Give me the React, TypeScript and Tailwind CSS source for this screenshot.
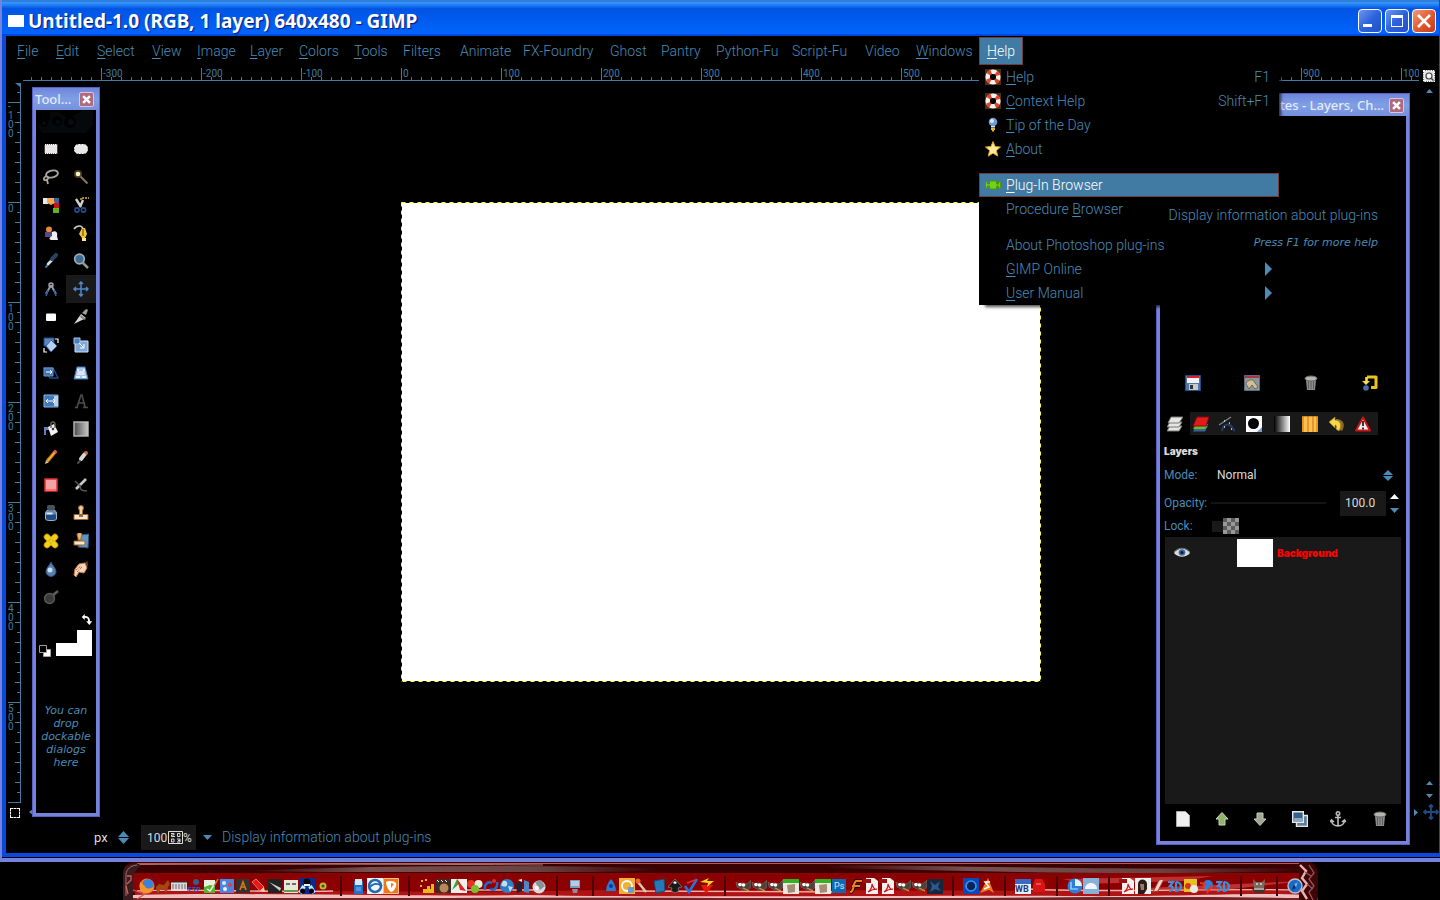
import React from "react";

type Kids = { children?: React.ReactNode };

function Icon({ children, size = 16 }: Kids & { size?: number }) {
  return (
    <svg viewBox="0 0 16 16" width={size} height={size} className="block shrink-0" aria-hidden="true">
      {children}
    </svg>
  );
}

/* The letter after an underscore is the keyboard mnemonic. */
function Mnemonic({ text }: { text: string }) {
  const at = text.indexOf("_");
  if (at < 0) return <>{text}</>;
  return (
    <>
      {text.slice(0, at)}
      <span className="underline underline-offset-2">{text[at + 1]}</span>
      {text.slice(at + 2)}
    </>
  );
}

function Triangle({ dir, className = "" }: { dir: "up" | "down" | "left" | "right"; className?: string }) {
  const d = {
    up: "M0 5 L5 0 L10 5Z",
    down: "M0 0 L5 5 L10 0Z",
    left: "M5 0 L0 5 L5 10Z",
    right: "M0 0 L5 5 L0 10Z",
  }[dir];
  const flat = dir === "up" || dir === "down";
  return (
    <svg viewBox={flat ? "0 0 10 5" : "0 0 5 10"} preserveAspectRatio="none" className={"block shrink-0 " + className} fill="currentColor" aria-hidden="true">
      <path d={d} />
    </svg>
  );
}

/* ---------- tool icons ---------- */

const tools: { name: string; art: React.ReactNode }[] = [
  { name: "Rectangle Select", art: <rect x="2" y="3.500" width="12" height="9" fill="#e8e6e6" stroke="#fff" strokeDasharray="1 1" /> },
  { name: "Ellipse Select", art: <rect x="1.500" y="3.500" width="13" height="9" rx="4" fill="#e8e6e6" stroke="#fff" strokeDasharray="2 1" /> },
  { name: "Free Select", art: <g fill="none" stroke="#aaa7a2" strokeWidth="1.800"><ellipse cx="9" cy="5" rx="6" ry="3.500" transform="rotate(-12 9 5)" /><path d="M4 7 C0 8 0 12 3 11 S6 8 4 8 M4 11 L5 15" /></g> },
  { name: "Fuzzy Select", art: <g><path d="M7 7 L14.500 14.500" stroke="#8d7754" strokeWidth="2" /><circle cx="5" cy="5" r="4" fill="#6c5530" opacity=".7" /><circle cx="5" cy="5" r="2.300" fill="#fff3c0" /></g> },
  { name: "Select by Color", art: <g><path d="M0 1h5v6H0z" fill="#e9e9ef" /><path d="M4 1h7l1 5-4 2-4-2z" fill="#f2a94f" /><path d="M11 1h5v5h-4z" fill="#3465a4" /><path d="M11 6h5v5h-5z" fill="#cc1020" /><path d="M10 11h6v5h-6z" fill="#5fb61b" /></g> },
  { name: "Scissors", art: <g fill="none"><path d="M3 2 L8 10 M10 3 L7 10" stroke="#cfcfcb" strokeWidth="2.400" /><path d="M8 3V1h8" stroke="#e9b23c" strokeWidth="1.400" strokeDasharray="2 1" /><rect x="2" y="11" width="4" height="4" rx="1.500" stroke="#204a87" strokeWidth="1.800" /><rect x="8.500" y="11" width="4" height="4" rx="1.500" stroke="#204a87" strokeWidth="1.800" /></g> },
  { name: "Foreground Select", art: <g><circle cx="6" cy="4.500" r="3" fill="#e58a36" /><path d="M2 7h9v5H2z" fill="#554a86" /><path d="M9 7c4-2 6 1 5 4l1 4H8c-3-1-1-3 1-4z" fill="#eeeef4" /></g> },
  { name: "Paths", art: <g><path d="M1 4 C4 0 9 0 10 4" stroke="#c9c9c3" strokeWidth="1.600" fill="none" /><path d="M9 3h3l2 6-2 4H9L6 9z" fill="#f0c53c" /><path d="M10 4v7" stroke="#574117" /><path d="M9 13h4v3H9z" fill="#fae98c" /></g> },
  { name: "Color Picker", art: <g strokeLinecap="round"><path d="M3 14 L9 7" stroke="#3a77a5" strokeWidth="2" /><path d="M5 11 L9 7" stroke="#d9dde0" strokeWidth="2.500" /><path d="M9 6 L13 2" stroke="#29435f" strokeWidth="4" /></g> },
  { name: "Zoom", art: <g><path d="M10 10 L15 15" stroke="#979797" strokeWidth="2.500" /><circle cx="6.500" cy="6" r="4.800" fill="#416b94" stroke="#a4adb5" strokeWidth="1.700" /></g> },
  { name: "Measure", art: <g fill="none"><path d="M8 4 L3 13" stroke="#8d9bac" strokeWidth="2" /><path d="M8 4 L13 13" stroke="#8d9bac" strokeWidth="2" /><path d="M5 9 L3 15 M11 9 L13 15" stroke="#345eab" strokeWidth="1.500" /><circle cx="8" cy="4" r="2" stroke="#a5a5a5" strokeWidth="1.500" /></g> },
  { name: "Move", art: <path d="M8 1v14M1 8h14M6 3l2-2 2 2M6 13l2 2 2-2M3 6L1 8l2 2M13 6l2 2-2 2" stroke="#5185c9" strokeWidth="1.500" fill="none" /> },
  { name: "Align", art: <rect x="3" y="4.500" width="10" height="7.500" rx="1" fill="#fff" /> },
  { name: "Crop", art: <g><path d="M1 15 L8 5 L13 9 Z" fill="#d8d8d4" /><path d="M9 4l4-4 2 1-2 5z" fill="#9e9e9a" /><path d="M8 6l5 4-2 1-4-3z" fill="#878783" /></g> },
  { name: "Rotate", art: <g><path d="M1 1h10v8H1z" fill="#5b87c0" stroke="#204a87" /><path d="M8 3l6 6-6 6-5-6z" fill="#b9d1ee" stroke="#3465a4" /><path d="M12 2h3v4M1 11v4h3" stroke="#fff" fill="none" strokeWidth="1.200" /></g> },
  { name: "Scale", art: <g><path d="M2 4h13v11H2z" fill="#7da9d9" stroke="#cfe0f4" /><path d="M1 1h6v6H1z" fill="#4b80bf" stroke="#a9c6e9" /><path d="M6 6l5 5M11 7v4H7" stroke="#fff" fill="none" /></g> },
  { name: "Shear", art: <g><path d="M1 3h9l5 10H7z" fill="none" stroke="#204a87" strokeWidth="1.300" /><path d="M1 3h9v8H1z" fill="#4373ad" stroke="#6c98cc" /><path d="M3 7h6M7 5l2 2-2 2" stroke="#fff" fill="none" /></g> },
  { name: "Perspective", art: <g><path d="M4 2h8l3 12H1z" fill="#a9c5e9" stroke="#4377b4" /><path d="M5 6h6l1 4H4z" fill="#dce8f7" /><path d="M3 12h4M9 12h4M5 4v2M11 4v2" stroke="#fff" strokeWidth="1.400" /></g> },
  { name: "Flip", art: <g><path d="M1 2h14v12H1z" fill="#4078b8" stroke="#8db4e2" /><path d="M11 3h4v10h-4z" fill="#b9d0ec" /><path d="M3 8h9M5 6L3 8l2 2M10 6l2 2-2 2" stroke="#fff" fill="none" /></g> },
  { name: "Text", art: <path d="M2 14.500h3M10 14.500h5M4 14L8 2h1l3 12M6 10h6" stroke="#4c4c4c" strokeWidth="1.600" fill="none" /> },
  { name: "Bucket Fill", art: <g><path d="M1 6h6v3H3v5H1z" fill="#6582b8" /><path d="M5 6l6-3 4 8-7 4z" fill="#f2f2f2" /><path d="M8 7V2c1-2 4-1 4 1v4" stroke="#70665d" fill="none" strokeWidth="1.400" /><circle cx="10" cy="8" r="1.200" fill="#333" /></g> },
  { name: "Blend", art: <g><defs><linearGradient id="blend"><stop stopColor="#4b4b4b" /><stop offset="1" stopColor="#c7c7c7" /></linearGradient></defs><rect x="1" y="1" width="14" height="14" fill="url(#blend)" stroke="#bdbdbd" strokeWidth="1.400" /></g> },
  { name: "Pencil", art: <g><path d="M4 12.500L12 3" stroke="#b86c12" strokeWidth="3.600" /><path d="M4.500 12L12 3" stroke="#f1b945" strokeWidth="1.500" /><path d="M11.500 3.600l1.700-2" stroke="#de5868" strokeWidth="3.600" /><path d="M2 15l1-3.500 2.500 2z" fill="#e8d4a8" /></g> },
  { name: "Paintbrush", art: <g strokeLinecap="round"><path d="M12 5l1-1" stroke="#c5743d" strokeWidth="4" /><path d="M8 10l3-4" stroke="#d3d7d9" strokeWidth="4" /><path d="M5 14l2-2" stroke="#4d4d4d" strokeWidth="2" /></g> },
  { name: "Eraser", art: <g><path d="M2 2h12v12H2z" fill="#f5a2a4" stroke="#df3030" strokeWidth="1.500" /><path d="M3 12h10v2H3z" fill="#fb6e6e" /></g> },
  { name: "Airbrush", art: <g fill="none"><path d="M3 12L13 2" stroke="#c7c7c7" strokeWidth="2.600" /><path d="M8 8c-2 4 0 6 6 6M2 4l5 5" stroke="#565656" strokeWidth="1.400" /></g> },
  { name: "Ink", art: <g><path d="M2.500 8c0-2 2-3 5.500-3s5.500 1 5.500 3v6c0 2-11 2-11 0z" fill="#5f86b8" stroke="#9db4cf" /><path d="M3 9.500h10V14c-1 1.300-9 1.300-10 0z" fill="#1f4b83" /><path d="M3.500 7.500h6v2h-6z" fill="#dce6f0" /><rect x="4" y="0" width="8" height="5.500" rx="2" fill="#4b5054" /></g> },
  { name: "Clone", art: <g stroke="#a7631d"><path d="M5.500 3a2.500 2.500 0 015 0L9.500 6v4h-3V6z" fill="#f0cf9f" /><path d="M1 9.500h14v5H1z" fill="#f4e7d3" /><path d="M6 11h4" stroke="#444" strokeWidth="1.400" /></g> },
  { name: "Heal", art: <g strokeLinecap="round"><path d="M4 4l8 8M12 4l-8 8" stroke="#c29400" strokeWidth="6.500" /><path d="M4 4l8 8M12 4l-8 8" stroke="#f3d01e" strokeWidth="4.800" /><path d="M5.500 8L8 5.500 10.500 8 8 10.500z" fill="none" stroke="#b98c08" strokeDasharray="1 1" strokeLinecap="butt" /></g> },
  { name: "Perspective Clone", art: <g><path d="M7 2l9-1-1 14-10-1z" fill="#5e93c5" stroke="#294f7d" /><path d="M4 2a2.500 2.500 0 015 0L8 5v2H5V5z" fill="#e8b57a" stroke="#a7631d" /><path d="M1 8h11v4H1z" fill="#f4e7d3" stroke="#a7631d" /></g> },
  { name: "Blur", art: <g><path d="M8 1c1 3 5 6 5 9.500a5 5 0 01-10 0C3 7 7 4 8 1z" fill="#5580b0" stroke="#36557d" /><circle cx="7" cy="9" r="2.500" fill="#cadcf0" /></g> },
  { name: "Smudge", art: <g><path d="M11 2l4-2v5l-3 2z" fill="#53371b" /><path d="M2 8l4-5 6-1 2 5-3 5-5-1-3 5-2-2z" fill="#f3d6bd" stroke="#cb7a36" /><path d="M3 9l5-4M4 11l5-5" stroke="#b33224" strokeDasharray="1 1" /></g> },
  { name: "Dodge / Burn", art: <g><path d="M9 7l6-5" stroke="#5d5d5d" strokeWidth="2.500" /><circle cx="6.500" cy="9.500" r="5" fill="#3a3a3a" stroke="#5c5c5c" strokeWidth="1.300" /></g> },
];

/* ---------- shared small art ---------- */

const moveCross = <path d="M8 1v14M1 8h14M6 3l2-2 2 2M6 13l2 2 2-2M3 6L1 8l2 2M13 6l2 2-2 2" stroke="#204a87" strokeWidth="1.800" fill="none" />;

const lifebuoy = (
  <g>
    <path d="M0 0h16v16H0z" fill="#4c3016" />
    <circle cx="8" cy="8" r="5.300" fill="none" stroke="#f3f1ee" strokeWidth="4.600" />
    <circle cx="8" cy="8" r="5.300" fill="none" stroke="#e2432c" strokeWidth="4.600" strokeDasharray="3.330 5" strokeDashoffset="-2.500" />
    <circle cx="8" cy="8" r="3" fill="#000" />
  </g>
);
const bulb = (
  <g>
    <circle cx="8" cy="5" r="4.300" fill="#6f9ad0" />
    <circle cx="7" cy="4" r="2" fill="#d8e6f6" />
    <path d="M6 9h4v1.500H6z" fill="#dce5f0" />
    <path d="M6 11h4v2H6zM7 13h2v1.500H7z" fill="#e8b923" />
  </g>
);
const star = <path d="M8 .6l2.100 5 5.400.4-4.100 3.500 1.300 5.600L8 12.200l-4.700 2.900 1.300-5.600L.5 6l5.400-.4z" fill="#fdeba0" stroke="#e0a020" />;
const plug = (
  <g fill="#73d216" stroke="#4e9a06">
    <path d="M.5 5h2v2h2V4h7v3h2V5h2v6h-2V9h-2v3h-7V9h-2v2h-2z" />
  </g>
);
const trash = (
  <g>
    <path d="M3 5h10l-1 10H4z" fill="#8d8d8b" />
    <path d="M5.500 6v8M8 6v8M10.500 6v8" stroke="#5c5c5a" />
    <ellipse cx="8" cy="3.500" rx="6" ry="2.500" fill="#b5b5b2" stroke="#6a6a68" />
  </g>
);
const swap = <path d="M1 4l4-4v2.500c5 0 7 3 7 7h3l-4 5-4-5h2.500c0-3-1-4.500-4.500-4.500V8z" fill="#fff" />;

/* ---------- window chrome ---------- */

const menus: [string, string][] = [
  ["_File", "w-[39px]"], ["_Edit", "w-[41px]"], ["_Select", "w-[55px]"], ["_View", "w-[45px]"],
  ["_Image", "w-[53px]"], ["_Layer", "w-[49px]"], ["_Colors", "w-[55px]"], ["_Tools", "w-[49px]"],
  ["Filte_rs", "w-[57px]"], ["Animate", "w-[63px]"], ["FX-Foundry", "w-[87px]"], ["Ghost", "w-[51px]"],
  ["Pantry", "w-[55px]"], ["Python-Fu", "w-[76px]"], ["Script-Fu", "w-[73px]"], ["Video", "w-[51px]"],
  ["_Windows", "w-[71px]"],
];

function TitleBar() {
  const box = "flex size-6 items-center justify-center rounded-[4px] border border-white";
  return (
    <header className="flex h-9 shrink-0 items-center gap-1 border-t-2 border-[#2f7fd8] bg-linear-to-b from-[#3c9bff] from-0% via-[#0054e3] via-20% to-[#0066ff] pl-[6px] pr-[3px] pt-1 shadow-[inset_0_-2px_0_#0048d8]">
      <span className="h-3 w-4 bg-white" />
      <h1 className="grow whitespace-nowrap font-['Noto_Sans',sans-serif] text-[19px] leading-6 font-bold text-white [text-shadow:1px_1px_1px_#0a1883]">
        Untitled-1.0 (RGB, 1 layer) 640x480 - GIMP
      </h1>
      <div className="flex gap-[3px]">
        <button aria-label="Minimize" className={box + " bg-linear-to-br from-[#6d95f0] via-[#2c62dd] to-[#2450c8]"}>
          <Icon><path d="M1 11h9v3H1z" fill="#fff" /></Icon>
        </button>
        <button aria-label="Maximize" className={box + " bg-linear-to-br from-[#6d95f0] via-[#2c62dd] to-[#2450c8]"}>
          <Icon><path d="M2 2h12v12H2z M3 5h10v8H3z" fillRule="evenodd" fill="#fff" /></Icon>
        </button>
        <button aria-label="Close" className={box + " bg-linear-to-br from-[#f09a78] via-[#e25a33] to-[#c43a12]"}>
          <Icon><path d="M2 2l12 12M14 2L2 14" stroke="#fff" strokeWidth="2.600" /></Icon>
        </button>
      </div>
    </header>
  );
}

type Item = { label: string; icon?: React.ReactNode; keys?: string; sub?: boolean; active?: boolean; gap?: boolean };
const helpItems: Item[] = [
  { label: "_Help", icon: lifebuoy, keys: "F1" },
  { label: "_Context Help", icon: lifebuoy, keys: "Shift+F1" },
  { label: "_Tip of the Day", icon: bulb },
  { label: "_About", icon: star },
  { label: "_Plug-In Browser", icon: plug, active: true, gap: true },
  { label: "Procedure _Browser" },
  { label: "About Photoshop plug-ins", gap: true },
  { label: "_GIMP Online", sub: true },
  { label: "_User Manual", sub: true },
];

function HelpMenu() {
  return (
    <div role="menu" className="absolute left-0 top-7 z-30 flex w-[300px] flex-col bg-black shadow-[4px_4px_3px_-2px_rgba(0,0,0,0.7)]">
      {helpItems.map((it) => (
        <button
          key={it.label}
          role="menuitem"
          className={
            "flex h-6 items-center gap-[5px] border pl-[5px] pr-[6px] text-left whitespace-nowrap " +
            (it.gap ? "mt-3 " : "") +
            (it.active ? "border-[#703c40] bg-[#417ba3] text-white" : "border-transparent")
          }
        >
          <span className="size-4">{it.icon && <Icon>{it.icon}</Icon>}</span>
          <span className="grow"><Mnemonic text={it.label} /></span>
          {it.keys && <span className="pr-[2px]">{it.keys}</span>}
          {it.sub && <Triangle dir="right" className="h-[14px] w-[7px]" />}
        </button>
      ))}
    </div>
  );
}

function MenuBar() {
  return (
    <nav className="flex h-[30px] shrink-0 items-stretch pl-[3px] pt-px">
      {menus.map(([label, width]) => (
        <button key={label} className={"shrink-0 px-2 text-left whitespace-nowrap " + width}>
          <Mnemonic text={label} />
        </button>
      ))}
      <div className="relative w-11 shrink-0">
        <button className="h-7 w-full border border-[#703c40] bg-[#417ba3] px-[7px] text-left text-white">
          <Mnemonic text="_Help" />
        </button>
        <HelpMenu />
        <div role="tooltip" className="absolute left-[188px] top-[163px] z-40 flex w-[224px] flex-col items-end gap-[10px] bg-black pt-[6px] pr-[13px] whitespace-nowrap">
          <span className="leading-[18px]">Display information about plug-ins</span>
          <span className="font-['DejaVu_Sans',sans-serif] text-[11px] leading-[18px] font-medium italic">Press F1 for more help</span>
        </div>
      </div>
    </nav>
  );
}

function TopRuler() {
  const majors = Array.from({ length: 15 }, (_, i) => i - 4);
  return (
    <svg width="100%" height="15" className="block overflow-hidden" fill="#417ba3" aria-hidden="true">
      <rect width="100%" height="1" y="14" />
      {majors.map((m) => {
        const x = 378 + m * 100;
        return (
          <g key={m}>
            <rect x={x} y="2" width="1" height="12" />
            {[1, 2, 3, 4, 5, 6, 7, 8, 9].map((k) => (
              <rect key={k} x={x + k * 10} y="11" width="1" height="3" />
            ))}
            <text x={x + 2} y="11" fontSize="10" fontWeight="400">{m * 100}</text>
          </g>
        );
      })}
    </svg>
  );
}

function LeftRuler() {
  const majors = Array.from({ length: 7 }, (_, i) => i - 1);
  return (
    <svg width="17" height="722" className="block" fill="#417ba3" aria-hidden="true">
      <path d="M9 2h5v4z" />
      <rect x="14" y="2" width="1" height="720" />
      <rect x="11" y="11" width="3" height="1" />
      {majors.map((m) => {
        const y = 121 + m * 100;
        return (
          <g key={m}>
            <rect x="2" y={y} width="12" height="1" />
            {[1, 2, 3, 4, 5, 6, 7, 8, 9].map((k) => (
              <rect key={k} x={k % 2 ? 11 : 9} y={y + k * 10} width={k % 2 ? 3 : 5} height="1" />
            ))}
            {String(m * 100).split("").map((c, i) => (
              <text key={i} x="2" y={y + (m < 0 ? 8 : 10) + i * 9} fontSize="10" fontWeight="400">{c}</text>
            ))}
          </g>
        );
      })}
      <rect x="2" y="721" width="12" height="1" />
    </svg>
  );
}

/* ---------- floating windows ---------- */

function PaletteWindow({ title, className, align, children }: Kids & { title: string; className: string; align: string }) {
  return (
    <section className={"absolute z-20 flex flex-col border border-[#5a5fc4] bg-[#7583dc] " + className}>
      <header className="flex h-[22px] shrink-0 items-center gap-1 bg-linear-to-b from-[#6f86dc] via-[#7f9fe6] to-[#7590dc] pl-[2px] pr-[5px]">
        <h2 className={"grow overflow-hidden font-['Noto_Sans',sans-serif] text-[13px] leading-5 font-medium whitespace-nowrap text-[#e4eafa] " + align}>{title}</h2>
        <button aria-label={"Close " + title} className="flex size-[15px] shrink-0 items-center justify-center rounded-[2px] border border-[#dcc5d8] bg-[#b06a80]">
          <Icon size={11}><path d="M3 3l10 10M13 3L3 13" stroke="#fff" strokeWidth="3.600" /></Icon>
        </button>
      </header>
      <div className="mx-[3px] mb-[3px] flex grow flex-col bg-black">{children}</div>
    </section>
  );
}

function Toolbox() {
  return (
    <PaletteWindow title="Tool..." align="text-left" className="-bottom-[14px] left-[9px] top-[6px] w-[68px]">
      <svg viewBox="0 0 60 25" className="block h-[25px] w-[60px] shrink-0" aria-hidden="true">
        <path d="M3 14c3-6 8-6 11-2V2h8l8 5h6L46 1h11v14l-7 8H8c-4-1-6-5-5-9z" fill="#06090c" />
        <circle cx="8" cy="13" r="4" fill="#000" /><circle cx="21" cy="11" r="5" fill="#000" /><circle cx="34" cy="12" r="6" fill="#000" />
        <circle cx="8" cy="13" r="2" fill="#080c10" /><circle cx="22" cy="12" r="2" fill="#080c10" /><circle cx="35" cy="12" r="3" fill="#080c10" />
      </svg>
      <div className="grid grid-cols-2">
        {tools.map((t) => (
          <button key={t.name} aria-label={t.name} className={"flex h-7 items-center justify-center " + (t.name === "Move" ? "bg-[#191919]" : "")}>
            <Icon>{t.art}</Icon>
          </button>
        ))}
      </div>
      <svg viewBox="0 0 60 48" className="block h-12 w-[60px] shrink-0" aria-hidden="true">
        <g transform="translate(45 3) scale(.75)">{swap}</g>
        <path d="M41 19h15v26H20V32h21z" fill="#fff" />
        <path d="M7.500 38.500h7v7h-7z" fill="#fff" stroke="#a89c9c" />
        <path d="M3.500 34.500h7v7h-7z" fill="#000" stroke="#a89c9c" />
      </svg>
      <p className="px-1 pt-[45px] text-center font-['DejaVu_Sans',sans-serif] text-[11px] leading-[13px] italic">You can drop dockable dialogs here</p>
    </PaletteWindow>
  );
}

const presetButtons: [string, React.ReactNode][] = [
  ["Save options", <g><path d="M.5.500h15v15H.5z" fill="#4a78b0" stroke="#254e80" /><path d="M2 1h12v7H2z" fill="#f2f2f2" /><path d="M2 1h12v2H2z" fill="#d8202a" /><path d="M4 9h9v6H4z" fill="#c9c9c9" /><path d="M5 10h3v4H5z" fill="#333" /></g>],
  ["Restore options", <g><path d="M.5.500h15v15H.5z" fill="#8797a4" stroke="#5b6b80" /><path d="M1 1h14v2H1z" fill="#a8343c" /><path d="M2 9c0-3 5-5 7-4l5 7-3 2-3-4-3 4z" fill="#d2bf93" stroke="#74694f" /></g>],
  ["Delete options", trash],
  ["Reset options", <g><path d="M5 2h9v10.500H9" fill="none" stroke="#ecc31c" strokeWidth="3" strokeLinejoin="round" /><path d="M0 6h8l-4 4z" fill="#f8dc46" /><path d="M4.500 2v5" stroke="#f8dc46" strokeWidth="2.600" /><circle cx="4" cy="13" r="2.800" fill="#3f6ea8" /></g>],
];

const tabs: [string, string, React.ReactNode][] = [
  ["Layers", "w-[30px] pl-[7px]", <g fill="#e5e5e3" stroke="#777"><path d="M3 10h12l-3 5H0z" /><path d="M3 6h12l-3 5H0z" /><path d="M4 1h12l-4 6H1z" /></g>],
  ["Channels", "w-[26px] bg-[#191919] pl-[3px]", <g><path d="M3 10h12l-3 5.500H0z" fill="#3465a4" /><path d="M3 8h12l-3 5H0z" fill="#73b81e" /><path d="M4 1h12l-3 9H0z" fill="#e01b1b" stroke="#8c0808" /></g>],
  ["Paths", "w-[26px] bg-[#191919] pl-[3px]", <g fill="none"><path d="M0 9L12 1" stroke="#7f8790" strokeWidth="1.200" /><path d="M3 15c1-7 8-9 11-2l2 2" stroke="#213d66" strokeWidth="2" /><path d="M5 5h1M12 13h1M5 11h1M10 7h1" stroke="#dfe5ec" strokeWidth="1.500" /></g>],
  ["Brushes", "w-[28px] bg-[#191919] pl-1", <g><path d="M0 0h16v16H0z" fill="#fff" /><circle cx="7.500" cy="7.500" r="5.500" fill="#000" /><path d="M16 11v5h-5z" fill="#729fcf" /></g>],
  ["Gradients", "w-[28px] bg-[#191919] pl-1", <g><defs><linearGradient id="grad"><stop stopColor="#000" /><stop offset="1" stopColor="#fff" /></linearGradient></defs><path d="M0 0h16v16H0z" fill="url(#grad)" /></g>],
  ["Patterns", "w-[28px] bg-[#191919] pl-1", <g><path d="M0 0h16v16H0z" fill="#fdbf4d" /><path d="M1 0v16M6 0v16M11 0v16M15 0v16" stroke="#d58518" strokeWidth="1.300" /><path d="M0 0h16" stroke="#96621b" /></g>],
  ["Undo History", "w-[26px] bg-[#191919] pl-[3px]", <g><path d="M7 3c7 0 10 5 6 12-1-1-3-1-4-2 3-2 2-4-1-5z" fill="#8d6a2c" /><path d="M0 6l6-5v3c6 0 7 6 4 11l-3-2c1-3 0-4-1-4v3z" fill="#f2d64f" stroke="#a98416" strokeWidth=".7" /></g>],
  ["Error Console", "w-[26px] bg-[#191919] pl-[3px]", <g><path d="M8 1.500L15 14.500H1z" fill="#eee" stroke="#cc1414" strokeWidth="2" strokeLinejoin="round" /><path d="M8 5v5M8 11.500v2" stroke="#222" strokeWidth="1.800" /></g>],
];

const layerButtons: [string, string, React.ReactNode][] = [
  ["New layer", "w-[39px]", <path d="M1.500.500h9l4 4v11h-13z" fill="#f0f0ef" stroke="#aaa" />],
  ["Raise layer", "w-[38px]", <path d="M8 1.500l6 6.500h-3v6H5V8H2z" fill="#8fb56a" stroke="#c7d6b8" />],
  ["Lower layer", "w-[40px]", <path d="M8 14.500L2 8h3V2h6v6h3z" fill="#9fa894" stroke="#c5cbbd" />],
  ["Duplicate layer", "w-[38px]", <g><path d="M4.500 4.500h11v11h-11z" fill="#5f7f9f" stroke="#e8e8e8" strokeWidth="1.400" /><path d="M.7.700h10.600v10.600H.7z" fill="#34608c" stroke="#e8e8e8" strokeWidth="1.400" /><path d="M2 7h8v3H2z" fill="#8fa6bb" /></g>],
  ["Anchor layer", "w-[42px]", <g fill="none" stroke="#bcbcbc" strokeWidth="1.600"><circle cx="8" cy="2.500" r="1.700" /><path d="M8 4v11M5 6.500h6M1.500 9c0 4 3 6 6.500 6s6.500-2 6.500-6M0 11l1.500-2L4 11M12 11l2.500-2 1.500 2" /></g>],
  ["Delete layer", "w-[16px]", trash],
];

function LayersDock() {
  return (
    <PaletteWindow title="tes - Layers, Ch..." align="pr-px text-right" className="-bottom-[42px] right-[9px] top-[12px] w-[254px]">
      <div className="grow" />
      <div className="flex shrink-0 gap-[43px] pl-[25px]">
        {presetButtons.map(([name, art]) => (
          <button key={name} aria-label={name}><Icon>{art}</Icon></button>
        ))}
      </div>
      <div className="mt-[21px] flex h-[23px] shrink-0">
        {tabs.map(([name, cls, art]) => (
          <button key={name} aria-label={name} className={"flex shrink-0 items-center " + cls}><Icon>{art}</Icon></button>
        ))}
      </div>
      <div className="flex shrink-0 flex-col pl-1 pr-[3px] text-[12px] font-normal">
        <h3 className="mt-2 font-['Inter',sans-serif] text-[10px] leading-4 font-black text-[#dcdcdc]">Layers</h3>
        <div className="flex h-8 items-center">
          <label htmlFor="mode" className="w-[53px]">Mode:</label>
          <select id="mode" className="grow appearance-none bg-transparent text-[12px] text-[#dcdcdc]"><option>Normal</option></select>
          <span className="mr-[10px] flex flex-col gap-px"><Triangle dir="up" className="h-[5px] w-[10px]" /><Triangle dir="down" className="h-[5px] w-[10px]" /></span>
        </div>
        <div className="flex h-6 items-center">
          <label htmlFor="opacity" className="w-[47px]">Opacity:</label>
          <input id="opacity" type="range" defaultValue={100} className="h-[2px] w-[115px] appearance-none bg-[#141414] [&::-webkit-slider-thumb]:appearance-none" />
          <input aria-label="Opacity value" defaultValue="100.0" className="ml-[14px] h-[25px] w-[46px] bg-[#191919] pl-[5px] text-[12px] text-[#dcdcdc]" />
          <span className="ml-1 flex flex-col gap-[9px]"><Triangle dir="up" className="h-[5px] w-[9px] text-white" /><Triangle dir="down" className="h-[5px] w-[9px]" /></span>
        </div>
        <div className="flex h-[22px] items-center">
          <label htmlFor="lock" className="w-[48px]">Lock:</label>
          <input id="lock" type="checkbox" className="size-[11px] appearance-none bg-[#191919]" />
          <Icon><path d="M0 0h16v16H0z" fill="#999" /><path d="M0 0h4v4H0zM8 0h4v4H8zM4 4h4v4H4zM12 4h4v4h-4zM0 8h4v4H0zM8 8h4v4H8zM4 12h4v4H4zM12 12h4v4h-4z" fill="#5c5c5c" /></Icon>
        </div>
      </div>
      <div className="mx-[5px] h-[267px] shrink-0 bg-[#191919] pt-[2px]">
        <div className="flex h-7 items-center">
          <button aria-label="Layer visibility" className="ml-[9px]">
            <Icon><path d="M0 8c4-6 12-6 16 0-4 5-12 5-16 0z" fill="#d8dade" /><circle cx="8" cy="7.500" r="3.300" fill="#3b6aa5" /><circle cx="8" cy="7.500" r="1.500" fill="#0b1a30" /><path d="M0 7c4-5 12-5 16 0" fill="none" stroke="#6c6c6c" /></Icon>
          </button>
          <span className="ml-[47px] h-7 w-9 bg-white" />
          <span className="ml-1 font-['Inter',sans-serif] text-[10px] font-black text-[#ff0000]">Background</span>
        </div>
      </div>
      <div className="flex h-[37px] shrink-0 items-center pb-[7px] pl-[15px]">
        {layerButtons.map(([name, width, art]) => (
          <button key={name} aria-label={name} className={"shrink-0 " + width}><Icon>{art}</Icon></button>
        ))}
      </div>
    </PaletteWindow>
  );
}

/* ---------- image window body ---------- */

function ImageArea() {
  return (
    <div className="relative grid grow grid-cols-[17px_1fr_20px] grid-rows-[15px_1fr_18px]">
      <span />
      <TopRuler />
      <button aria-label="Zoom image" className="flex items-center justify-center pt-1">
        <Icon size={12}><path d="M1 1h14v14H1z" fill="#ddd" stroke="#fff" strokeWidth="2" strokeDasharray="2 1" /><circle cx="8" cy="8" r="4" fill="#f4f4f4" stroke="#444" strokeWidth="1.500" /><path d="M11 11l3 3" stroke="#444" strokeWidth="2" /></Icon>
      </button>

      <LeftRuler />
      <main className="relative flex items-center justify-center">
        <svg width="640" height="480" className="block" role="img" aria-label="Image canvas">
          <path d="M0 0h640v480H0z" fill="#fff" />
          <path d="M.5.500h639v479H.5z" fill="none" stroke="#000" />
          <path d="M.5.500h639v479H.5z" fill="none" stroke="#ffff20" strokeDasharray="4 4" />
        </svg>
        <Toolbox />
        <LayersDock />
      </main>
      <div className="flex flex-col items-center pt-2">
        <Triangle dir="up" className="h-[4px] w-[7px]" />
        <span className="grow" />
        <Triangle dir="up" className="h-[4px] w-[7px]" />
        <Triangle dir="down" className="mb-[5px] mt-[9px] h-[4px] w-[7px]" />
      </div>

      <button aria-label="Quick mask" className="ml-1 mt-[5px] size-[10px] border border-dashed border-white" />
      <div className="flex items-center justify-between pl-[6px]">
        <Triangle dir="left" className="h-[6px] w-[4px]" />
        <Triangle dir="right" className="mr-px h-[7px] w-[4px]" />
      </div>
      <button aria-label="Navigate" className="flex items-center justify-center pl-1"><Icon>{moveCross}</Icon></button>
    </div>
  );
}

function StatusBar() {
  return (
    <footer className="flex h-8 shrink-0 items-center pl-[88px] pt-px">
      <select aria-label="Unit" className="w-[24px] appearance-none bg-transparent text-[13px] font-normal text-[#dcdcdc]"><option>px</option></select>
      <span className="flex flex-col gap-px"><Triangle dir="up" className="h-[6px] w-[11px]" /><Triangle dir="down" className="h-[6px] w-[11px]" /></span>
      <div className="ml-3 flex h-[25px] w-[55px] items-center bg-[#191919] pl-[6px] text-[12px] font-normal text-[#dcdcdc]">
        <input aria-label="Zoom" defaultValue="100" className="w-[21px] bg-transparent" />
        <svg viewBox="0 0 15 13" className="h-[13px] w-[15px] shrink-0" fill="none" stroke="#dcdcdc" aria-hidden="true">
          <path d="M.5.500h14v12H.5z" />
          <path d="M3 2.500h3v1.500H3.500v1.500H7M9.500 2.500h2.500v3H9.500zM3.500 8h2.500v3H3.500zM9 8h3v3H9M10 9.500h2" />
        </svg>
        %
      </div>
      <Triangle dir="down" className="ml-[7px] h-[5px] w-[9px]" />
      <span className="ml-[10px] whitespace-nowrap">Display information about plug-ins</span>
    </footer>
  );
}

/* ---------- launcher dock ---------- */

const wilber = <g><path d="M1 4l3 2 3-1 5 1 4-4v6c-1 4-4 5-8 4L2 9z" fill="#4b443d" stroke="#8a7f72" strokeWidth=".5" /><circle cx="5" cy="6.500" r="1.800" fill="#fff" /><circle cx="8.500" cy="7" r="1.800" fill="#fff" /><path d="M8 10l6 3" stroke="#e09030" strokeWidth="1.200" /></g>;
const pdf = <g><path d="M3 0h8l4 3v13H3z" fill="#f4f0f0" /><path d="M0 1h8v4H0z" fill="#a01010" /><path d="M5 14c3-2 4-5 4-8 1 4 3 6 5 5-3 0-6 1-9 3" fill="none" stroke="#d01818" strokeWidth="1.200" /></g>;
const photo = <g><path d="M0 1h16v15H0z" fill="#ece8e0" /><path d="M0 1h16v4H0z" fill="#2fb31e" /><path d="M4 7l8-1v8l-7 1z" fill="#a68c74" /></g>;
const blob3d = <g fill="none" stroke="#3c8fd8" strokeWidth="2.200"><path d="M1 4h5L3 8c4 0 4 5-1 5M9 4v9c6 0 7-9 0-9" /></g>;
const globe = <g><circle cx="8" cy="8" r="7" fill="#2f7dc8" /><path d="M4 3c3-1 5 1 4 4s-5 1-6 0zM9 8l5 1-3 5z" fill="#bfe0f0" /></g>;

const launchers: React.ReactNode[][] = [
  [
    <g><circle cx="8" cy="8" r="7.500" fill="#ee7f16" /><circle cx="9" cy="6.500" r="5.500" fill="#3d82d4" /><path d="M1 4c2 1 3 3 5 4 0 2 3 4 8 1 0 5-5 7-9 6S0 10 1 4z" fill="#f8952e" /></g>,
    <path d="M1 9l3-3 5 1 4-5 2 4-2 3-1 5h-2l-1-3-4 1-1 3H2z" fill="#a04a10" />,
    <g><path d="M0 4h16v9H0z" fill="#ddd" /><path d="M2 6v5M5 6v5M8 6v5M11 6v5M14 6v5" stroke="#666" /><path d="M0 4h16" stroke="#333" /></g>,
    <g><circle cx="9" cy="4" r="3" fill="#3a5a8c" /><text x="1" y="14" fontSize="7" fontWeight="bold" fill="#1e5fc8">FTP</text></g>,
    <g><path d="M1 2h11v13H1z" fill="#e8f0e0" /><path d="M1 9l6-2 5 1v7H1z" fill="#55b530" /><path d="M4 11l3 2 6-9" stroke="#eef8e8" strokeWidth="1.500" fill="none" /><path d="M11 8l4-7" stroke="#c87a20" strokeWidth="1.500" /></g>,
    <g><path d="M1 1h14v14H1z" fill="#4a86e0" /><circle cx="5" cy="5" r="2" fill="#d8e8ff" /><circle cx="11" cy="7" r="2" fill="#e04040" /><circle cx="6" cy="11" r="2" fill="#f0f0ff" /></g>,
    <g><path d="M1 1h14v14H1z" fill="#33322e" /><path d="M5 12l3-8 3 8M6 9h4" stroke="#e07818" strokeWidth="1.500" fill="none" /></g>,
    <g><path d="M1 4l4-3 8 8-4 4z" fill="#e81818" stroke="#ff8a80" strokeWidth=".8" /><path d="M13 9l1 5-5-1z" fill="#f0d0a0" /></g>,
    <g><path d="M1 1h14v14H1z" fill="#222" /><path d="M2 4l11 9 1-3z" fill="#ccc" /></g>,
    <g><path d="M1 2h14v13H1z" fill="#e8e8d8" /><path d="M1 12h14v2H1z" fill="#5aa050" /><path d="M3 6h4M9 6h4" stroke="#445" strokeWidth="1.500" /></g>,
    <g><path d="M0 0h16v16H0z" fill="#0a2a90" /><path d="M1 15l4-7M15 15l-4-7" stroke="#c8e8ff" strokeWidth="4" /><circle cx="8" cy="4" r="3.400" fill="#000" /><path d="M5 7h6" stroke="#e8f4ff" strokeWidth="2" /><circle cx="3.500" cy="13" r="2.500" fill="#000" /><circle cx="12.500" cy="13" r="2.500" fill="#000" /></g>,
    <g><circle cx="8" cy="8" r="3.500" fill="#c5b530" /><circle cx="8" cy="8" r="1.500" fill="#2c5a20" /></g>,
  ],
  [
    <g><path d="M3 3h9v13H3z" fill="#2a70c0" /><path d="M4 1h7v6H4z" fill="#d8e8f8" /><path d="M5 9h5v4H5z" fill="#4a9ae8" /></g>,
    <g><path d="M0 0h16v16H0z" fill="#eef4fa" /><circle cx="8" cy="8" r="6" fill="none" stroke="#2468b0" strokeWidth="2.500" /><path d="M2 10c4-5 9-5 13-2" stroke="#2468b0" strokeWidth="2" fill="none" /></g>,
    <g><path d="M.5.500h15v15H.5z" fill="#f07818" stroke="#ffc090" /><path d="M3 4c3-2 9-1 10 1s-1 8-5 9c-2-1-5-6-5-10z" fill="#fff" /><path d="M8 5l3 1-3 4z" fill="#f07818" /></g>,
  ],
  [
    <g fill="#e8b818"><path d="M8 8h3v3H8zM12 6h3v9h-3zM4 11h10v4H4z" /><path d="M2 2h2v2H2zM6 1h2v2H6zM1 7h2v2H1z" /></g>,
    <g><path d="M0 1h16v14H0z" fill="#3a2c24" /><path d="M2 2l2 2M6 2l2 2M10 2l2 2" stroke="#eee" /><circle cx="9" cy="10" r="4.500" fill="#b88858" /></g>,
    <g><path d="M0 1h16v14H0z" fill="#eee" /><path d="M1 12L6 1l3 4z" fill="#35a528" /><path d="M6 1l9 12-6-1z" fill="#e02020" /></g>,
    <g><circle cx="4" cy="6" r="4" fill="#e83020" /><circle cx="11.500" cy="6" r="4" fill="#e8ecd8" /><circle cx="8" cy="11" r="4" fill="#78c030" /></g>,
    <g><path d="M2 12C1 6 5 3 9 5M14 4c1 6-3 9-7 7" stroke="#2a68d0" strokeWidth="2.500" fill="none" /><circle cx="11" cy="3" r="2" fill="#e03030" /></g>,
    globe,
    <g><path d="M1 6l6-4v11l-5 2z" fill="#16243c" /><path d="M9 2l5 2v11l-5-1z" fill="#4a88c8" /><path d="M3 2l4-1v3z" fill="#e8f0f8" /></g>,
    <g><circle cx="8" cy="9" r="6.500" fill="#d8dadc" /><path d="M4 4l6-2 4 6-5 4z" fill="#8a9098" /><circle cx="6" cy="10" r="2" fill="#fff" /></g>,
  ],
  [<g><path d="M3 2h10v8H3z" fill="#7a9ac0" /><path d="M4 3h8v5H4z" fill="#b8cce0" /><path d="M5 11h6l-1 4H6z" fill="#8890a0" /></g>],
  [
    <g><path d="M8 1c3 3 5 8 5 12H3C3 9 5 4 8 1z" fill="#2a7ad8" /><circle cx="8" cy="8" r="2" fill="#0a3a88" /></g>,
    <g><path d="M0 0h16v16H0z" fill="#f0b030" /><circle cx="8" cy="8" r="5" fill="none" stroke="#fff" strokeWidth="1.800" /><path d="M9 9h6v6H9z" fill="#6a9ad0" /></g>,
    <g><path d="M3 4l8 10" stroke="#d8c8a8" strokeWidth="2.500" /><circle cx="3" cy="3" r="2.500" fill="#f06030" /></g>,
    <path d="M3 3l10-2 1 12-9 2z" fill="#2878b8" stroke="#154a78" />,
    <g><path d="M8 1l7 8-4 1 1 3-4 2-4-2 1-3-4-1z" fill="#1a1a1a" stroke="#888" strokeWidth=".7" /><path d="M6 5l2-2 2 2-2 1z" fill="#fff" /></g>,
    <g fill="none"><path d="M2 8l4 6L14 1" stroke="#2a70e0" strokeWidth="2.600" /><path d="M4 5l8-3" stroke="#e03030" strokeWidth="1.500" /></g>,
    <g><path d="M2 7h12L7 16z" fill="#e81808" /><path d="M1 4l9-4-2 3h7l-7 6 1-4z" fill="#f8d020" /></g>,
  ],
  [
    wilber, wilber, wilber, photo, wilber, photo,
    <g><path d="M1 1h14v14H1z" fill="#1468b0" /><text x="3" y="11" fontSize="9" fontWeight="400" fill="#cfe8ff">Ps</text></g>,
    <g fill="none"><path d="M3 14c5 0 2-8 6-11h6M5 8h8" stroke="#1c0a04" strokeWidth="4" /><path d="M3 14c5 0 2-8 6-11h6M5 8h8" stroke="#f08020" strokeWidth="2" /></g>,
    pdf, pdf, wilber, wilber,
    <g><path d="M0 1h16v15H0z" fill="#17263a" /><path d="M3 3l5 4 5-4-2 6 3 4-6-2-5 3 2-6z" fill="#2a5a90" /></g>,
  ],
  [
    <g><path d="M0 0h16v16H0z" fill="#0a4ab8" /><circle cx="8" cy="8" r="5" fill="#06245c" stroke="#3a9af0" strokeWidth="1.500" /></g>,
    <g><path d="M1 15L9 0l6 15-5-3z" fill="#f07818" /><path d="M11 4H6l4 5-5 2" stroke="#fff" strokeWidth="1.500" fill="none" /></g>,
  ],
  [
    <g><path d="M0 1h16v15H0z" fill="#e8eef8" /><path d="M0 1h16v5H0z" fill="#3a6ac0" /><text x="0" y="14" fontSize="9" fontWeight="bold" fill="#1a3a80">WB</text></g>,
    <g><path d="M4 1h7l3 5v8H2V7z" fill="#d81414" /><path d="M5 6h5" stroke="#ff8a80" /></g>,
  ],
  [
    <g><circle cx="8" cy="8" r="7.500" fill="#2a80d8" /><path d="M8 1a7 7 0 017 7H8z" fill="#e8f2fc" /><path d="M4 4v7h7" stroke="#bcdcf8" strokeWidth="1.200" fill="none" /></g>,
    <g><path d="M0 0h16v16H0z" fill="#88b0d8" /><path d="M2 11c0-4 3-6 6-6s6 2 6 6z" fill="#f0f6fc" /></g>,
  ],
  [
    pdf,
    <g><path d="M0 0h16v16H0z" fill="#eee" /><path d="M3 16V6c0-6 9-6 9 0v5l-3 5z" fill="#2a1c18" /><path d="M5 6h4v6H6z" fill="#a07860" /></g>,
    <path d="M2 14L8 2l5-1-6 12z" fill="#e8d8d0" stroke="#b03020" />,
    blob3d,
    <g><path d="M1 1h13v13H1z" fill="#e8c020" /><circle cx="5" cy="8" r="3" fill="#d83020" /><circle cx="11" cy="11" r="4" fill="#e8ece0" /></g>,
    <g><circle cx="9" cy="7" r="5" fill="#2a80d8" /><path d="M1 5l5 1-2 4M8 15l5-8" stroke="#f03020" strokeWidth="2" fill="none" /></g>,
    blob3d,
  ],
  [<g><path d="M2 1l3 3h6l3-3-1 10H3z" fill="#7a6a5e" /><circle cx="6" cy="6" r="1" fill="#ddd" /><circle cx="10" cy="6" r="1" fill="#ddd" /><path d="M1 11h14l-3 4H4z" fill="#3c3632" /><path d="M3 10h10v2H3z" fill="#aaa29a" /></g>],
  [<g><circle cx="8" cy="8" r="7" fill="#1a6ac8" stroke="#b8c4d0" strokeWidth="1.400" /><path d="M5 12l2-6 4-2-2 6z" fill="#0a2a60" /><path d="M7 6l4-2-2 6" fill="#6ab0f0" /></g>],
];

function Launcher() {
  return (
    <nav aria-label="Launcher" className="flex h-[38px] shrink-0 justify-center overflow-hidden bg-black">
      <div className="relative flex items-end rounded-t-[10px] bg-[#3c0000] pb-1 pl-4 pr-[15px]">
        <svg viewBox="0 0 1195 38" preserveAspectRatio="none" className="absolute inset-0 h-full w-full rounded-t-[10px]" aria-hidden="true">
          <defs>
            <linearGradient id="steel"><stop stopColor="#3c0000" /><stop offset=".3" stopColor="#785050" /><stop offset=".7" stopColor="#6a4242" /><stop offset="1" stopColor="#3c0000" /></linearGradient>
          </defs>
          <path d="M0 0H1195V11H0z" fill="#3b0202" />
          <path d="M120 9C260 3 400 3 530 6C560 9 500 10 430 10H200z" fill="url(#steel)" />
          <path d="M700 3C860 4 960 8 1180 6V9C1000 14 850 9 700 6z" fill="url(#steel)" />
          <path d="M14 1.500H1180" stroke="#a85c5c" strokeWidth="1.200" />
          <path d="M14 2.500C120 2 300 2 420 3" stroke="#c89090" strokeWidth=".8" fill="none" />
          <path d="M10 11H1186V31H10z" fill="#8b0000" />
          <path d="M12 30C160 26 280 32 420 29S900 31 1182 27V35H12z" fill="#b01414" />
          <path d="M14 29C80 26 130 31 210 29M330 28H420M500 29L720 30M900 27C1000 31 1080 26 1180 28" stroke="#eeb0b0" strokeWidth="1.400" fill="none" />
          <path d="M10 33C120 30 260 35 400 33C560 36 800 33 940 34S1120 30 1182 33V36C1000 34 800 37 600 36S200 37 10 36z" fill="#eec0c0" />
          <path d="M940 17L1090 14 1060 19 960 22zM1000 27L1180 19 1100 28z" fill="#e05050" opacity=".6" />
          <path d="M0 37H1195" stroke="#7a2020" strokeWidth="2" />
          <path d="M0 38V10C2 3 8 1 16 2C20 4 11 8 10 14V38z" fill="#3a1c1e" />
          <path d="M3 34V12C4 7 7 4 14 3" stroke="#b06868" fill="none" />
          <path d="M4 14h4v4l-4 4M3 24l2 8M10 28l12 4-8 5" stroke="#d06060" strokeWidth="1.300" fill="none" />
          <path d="M1176 1C1188 0 1194 5 1194 14V38H1176z" fill="#3a0608" />
          <path d="M1177 3l6 6-4 7 5 6-5 7 5 8" stroke="#f0b0b0" strokeWidth="2.400" fill="none" />
          <path d="M1186 3l5 8-5 6 5 7-5 6 4 8M1182 10l6 4M1184 22l6 5" stroke="#a05058" strokeWidth="1.300" fill="none" />
        </svg>
        {launchers.map((group, i) => (
          <React.Fragment key={i}>
            {i > 0 && <span className="relative mx-[9px] h-5 w-[2px] bg-[#4a0000]" />}
            {group.map((art, j) => (
              <button key={j} aria-label={"Launcher " + (i + 1) + "." + (j + 1)} className="relative mb-[2px] w-4">
                <Icon>{art}</Icon>
              </button>
            ))}
          </React.Fragment>
        ))}
      </div>
    </nav>
  );
}

export default function App() {
  return (
    <div className="flex min-h-screen flex-col bg-black font-['Roboto',sans-serif] text-[14px] font-light text-[#4a8bb7]">
      <div className="flex grow flex-col border-b-4 border-l-2 border-[#7583dc] pb-px">
        <div className="flex grow flex-col border-b-4 border-r border-[#0a48e0] bg-[#0a48e0]">
          <TitleBar />
          <div className="ml-1 flex grow flex-col bg-black">
            <MenuBar />
            <ImageArea />
            <StatusBar />
          </div>
        </div>
      </div>
      <Launcher />
    </div>
  );
}
